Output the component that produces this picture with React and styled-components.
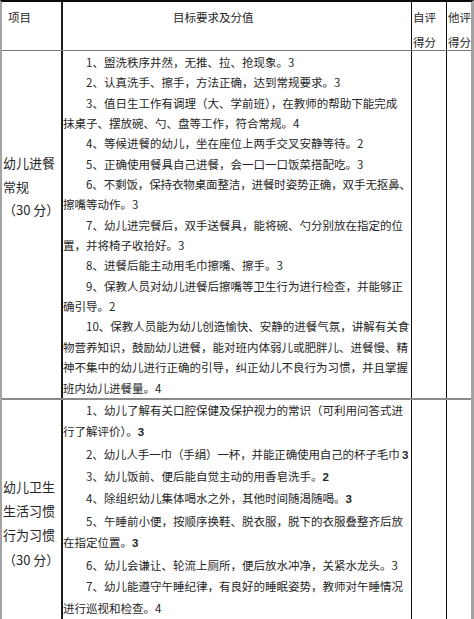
import React from "react";
import styled, { createGlobalStyle } from "styled-components";

const Global = createGlobalStyle`
  html, body { margin: 0; padding: 0; background: #fff; }
  body { font-family: "Noto Sans CJK SC", "Noto Sans", sans-serif; color: #262626; }
`;

const Sheet = styled.div`
  width: 474px;
  box-sizing: border-box;
  border-top: 2px solid #0a0a0a;
  border-left: 2px solid #a3a3a3;
  border-right: 3px solid #a3a3a3;
`;

const Row = styled.div`
  display: grid;
  grid-template-columns: 61px 349px 35px 24px;
  border-bottom: ${(p) => p.$border};
`;

const Cell = styled.div`
  box-sizing: border-box;
  overflow: hidden;
  border-right: ${(p) => p.$line || "none"};
`;

const HeaderCell = styled(Cell)`
  height: 48px;
  padding: 3px 0 0 ${(p) => p.$pad || 0}px;
  font-size: 11.5px;
  line-height: 25px;
  white-space: nowrap;
`;

const LabelCell = styled(Cell)`
  padding-top: ${(p) => p.$top}px;
  padding-left: 1px;
  font-size: 13px;
  line-height: ${(p) => p.$lh}px;
  white-space: nowrap;
`;

const ContentCell = styled(Cell)`
  overflow: visible;
  padding-top: ${(p) => p.$top}px;
  padding-left: 0;
  font-size: 11.5px;
  line-height: ${(p) => p.$lh}px;
`;

const Line = styled.div`
  white-space: nowrap;
  padding-left: ${(p) => (p.$indent ? "23px" : "0")};
  letter-spacing: ${(p) => (p.$tight ? "-0.12px" : "0")};
`;

const Bold = styled.span`
  font-family: "Liberation Sans", Arial, sans-serif;
  font-weight: 700;
`;

const COL1 = "2px solid #1c1c1c";
const COLN = "1px solid #111";

const section1 = [
  [true, "1、盥洗秩序井然，无推、拉、抢现象。3"],
  [true, "2、认真洗手、擦手，方法正确，达到常规要求。3"],
  [true, "3、值日生工作有调理（大、学前班），在教师的帮助下能完成"],
  [false, "抹桌子、摆放碗、勺、盘等工作，符合常规。4"],
  [true, "4、等候进餐的幼儿，坐在座位上两手交叉安静等待。2"],
  [true, "5、正确使用餐具自己进餐，会一口一口饭菜搭配吃。3"],
  [true, "6、不剩饭，保持衣物桌面整洁，进餐时姿势正确，双手无抠鼻、", true],
  [false, "擦嘴等动作。3"],
  [true, "7、幼儿进完餐后，双手送餐具，能将碗、勺分别放在指定的位"],
  [false, "置，并将椅子收拾好。3"],
  [true, "8、进餐后能主动用毛巾擦嘴、擦手。3"],
  [true, "9、保教人员对幼儿进餐后擦嘴等卫生行为进行检查，并能够正"],
  [false, "确引导。2"],
  [true, "10、保教人员能为幼儿创造愉快、安静的进餐气氛，讲解有关食"],
  [false, "物营养知识，鼓励幼儿进餐，能对班内体弱儿或肥胖儿、进餐慢、精"],
  [false, "神不集中的幼儿进行正确的引导，纠正幼儿不良行为习惯，并且掌握"],
  [false, "班内幼儿进餐量。4"],
];

const section2 = [
  [true, "1、幼儿了解有关口腔保健及保护视力的常识（可利用问答式进", null],
  [false, "行了解评价）。", "3"],
  [true, "2、幼儿人手一巾（手绢）一杯，并能正确使用自己的杯子毛巾 ", "3", true],
  [true, "3、幼儿饭前、便后能自觉主动的用香皂洗手。", "2"],
  [true, "4、除组织幼儿集体喝水之外，其他时间随渴随喝。", "3"],
  [true, "5、午睡前小便，按顺序换鞋、脱衣服，脱下的衣服叠整齐后放", null],
  [false, "在指定位置。", "3"],
  [true, "6、幼儿会谦让、轮流上厕所，便后放水冲净，关紧水龙头。3", null],
  [true, "7、幼儿能遵守午睡纪律，有良好的睡眠姿势，教师对午睡情况", null],
  [false, "进行巡视和检查。4", null],
];

export default function App() {
  return (
    <>
      <Global />
      <Sheet>
        <Row $border="1px solid #7a7a7a">
          <HeaderCell $line={COL1} $pad={6}>项目</HeaderCell>
          <HeaderCell $line={COLN} $pad={110}>目标要求及分值</HeaderCell>
          <HeaderCell $line={COLN} $pad={1}>
            自评
            <br />
            得分
          </HeaderCell>
          <HeaderCell $pad={1}>
            他评
            <br />
            得分
          </HeaderCell>
        </Row>

        <Row $border="2px solid #8a8a8a">
          <LabelCell $line={COL1} $top={100} $lh={23.5}>
            <div>幼儿进餐</div>
            <div>常规</div>
            <div>（30 分）</div>
          </LabelCell>
          <ContentCell $line={COLN} $top={1} $lh={20.35}>
            {section1.map(([indent, text, tight], i) => (
              <Line key={i} $indent={indent} $tight={tight}>
                {text}
              </Line>
            ))}
          </ContentCell>
          <Cell $line={COLN} />
          <Cell />
        </Row>

        <Row $border="2px solid #8f8f8f">
          <LabelCell $line={COL1} $top={75} $lh={24.3}>
            <div>幼儿卫生</div>
            <div>生活习惯</div>
            <div>行为习惯</div>
            <div>（30 分）</div>
          </LabelCell>
          <ContentCell $line={COLN} $top={0} $lh={21.4}>
            {section2.map(([indent, text, bold, tight], i) => (
              <Line key={i} $indent={indent} $tight={tight}>
                {text}
                {bold && <Bold>{bold}</Bold>}
              </Line>
            ))}
          </ContentCell>
          <Cell $line={COLN} />
          <Cell />
        </Row>
      </Sheet>
    </>
  );
}
